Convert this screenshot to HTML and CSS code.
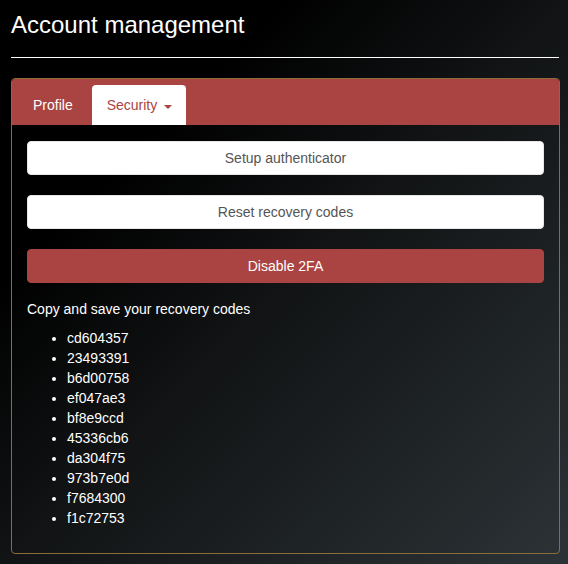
FILE: index.html
```html
<!DOCTYPE html>
<html>
  <head>
    <meta charset="utf-8" />
    <title>Account management</title>
    <link rel="stylesheet" href="styles.css">
  </head>

  <body>
    <div class="page_wrap">
      <h1 class="page_title">Account management</h1>
      <hr class="title_rule" />

      <div class="panel">
        <div class="panel_heading">
          <ul class="tabs">
            <li class="tab"><a href="#">Profile</a></li>
            <li class="tab active">
              <a href="#">Security <span class="caret"></span></a>
            </li>
          </ul>
        </div>

        <div class="panel_body">
          <button type="button" class="btn btn_default">Setup authenticator</button>
          <button type="button" class="btn btn_default">Reset recovery codes</button>
          <button type="button" class="btn btn_danger">Disable 2FA</button>

          <p class="codes_title">Copy and save your recovery codes</p>
          <ul class="codes">
            <li>cd604357</li>
            <li>23493391</li>
            <li>b6d00758</li>
            <li>ef047ae3</li>
            <li>bf8e9ccd</li>
            <li>45336cb6</li>
            <li>da304f75</li>
            <li>973b7e0d</li>
            <li>f7684300</li>
            <li>f1c72753</li>
          </ul>
        </div>
      </div>
    </div>
  </body>
</html>
```

FILE: styles.css
```css
html,
body {
  height: 100%;
}
body {
  margin: 0;
  font-family: "Liberation Sans", Arial, sans-serif;
  font-size: 14px;
  line-height: 20px;
  color: #fff;
  background: linear-gradient(135deg, #000 0%, #000 25%, #111314 50%, #2c3336 100%);
}
.page_wrap {
  padding: 0 8px 0 11px;
  overflow: hidden;
}
.page_title {
  margin: 12px 0 0;
  font-size: 24px;
  font-weight: normal;
  line-height: 1.1;
}
.title_rule {
  margin: 19px 1px 20px 0;
  border: 0;
  border-top: 1px solid #fff;
  height: 0;
}
.panel {
  border: 1px solid #8a6d3b;
  border-radius: 4px;
}
.panel_heading {
  background: #a94442;
  border-radius: 3px 3px 0 0;
  padding: 6px 6px 0;
}
.tabs {
  display: flex;
  margin: 0;
  padding: 0;
  list-style: none;
}
.tab {
  margin-right: 4px;
}
.tab a {
  display: block;
  padding: 10px 15px;
  color: #fff;
  text-decoration: none;
  border-radius: 4px 4px 0 0;
}
.tab.active a {
  background: #fff;
  color: #a94442;
  padding-right: 14px;
}
.caret {
  display: inline-block;
  width: 0;
  height: 0;
  margin-left: 3px;
  vertical-align: middle;
  border-top: 4px solid #a94442;
  border-left: 4px solid transparent;
  border-right: 4px solid transparent;
}
.panel_body {
  padding: 16px 15px 15px;
}
.btn {
  display: block;
  width: 100%;
  height: 34px;
  margin: 0 0 20px;
  padding: 6px 12px;
  font-family: inherit;
  font-size: 14px;
  line-height: 20px;
  border: 1px solid transparent;
  border-radius: 4px;
  cursor: pointer;
}
.btn_default {
  background: #fff;
  color: #555;
  border-color: #e6e6e6;
}
.btn_danger {
  background: #a94442;
  color: #fff;
  border-color: #a94442;
  margin-bottom: 16px;
}
.codes_title {
  margin: 0 0 9px;
}
.codes {
  margin: 0 0 10px;
  padding-left: 40px;
}
```
